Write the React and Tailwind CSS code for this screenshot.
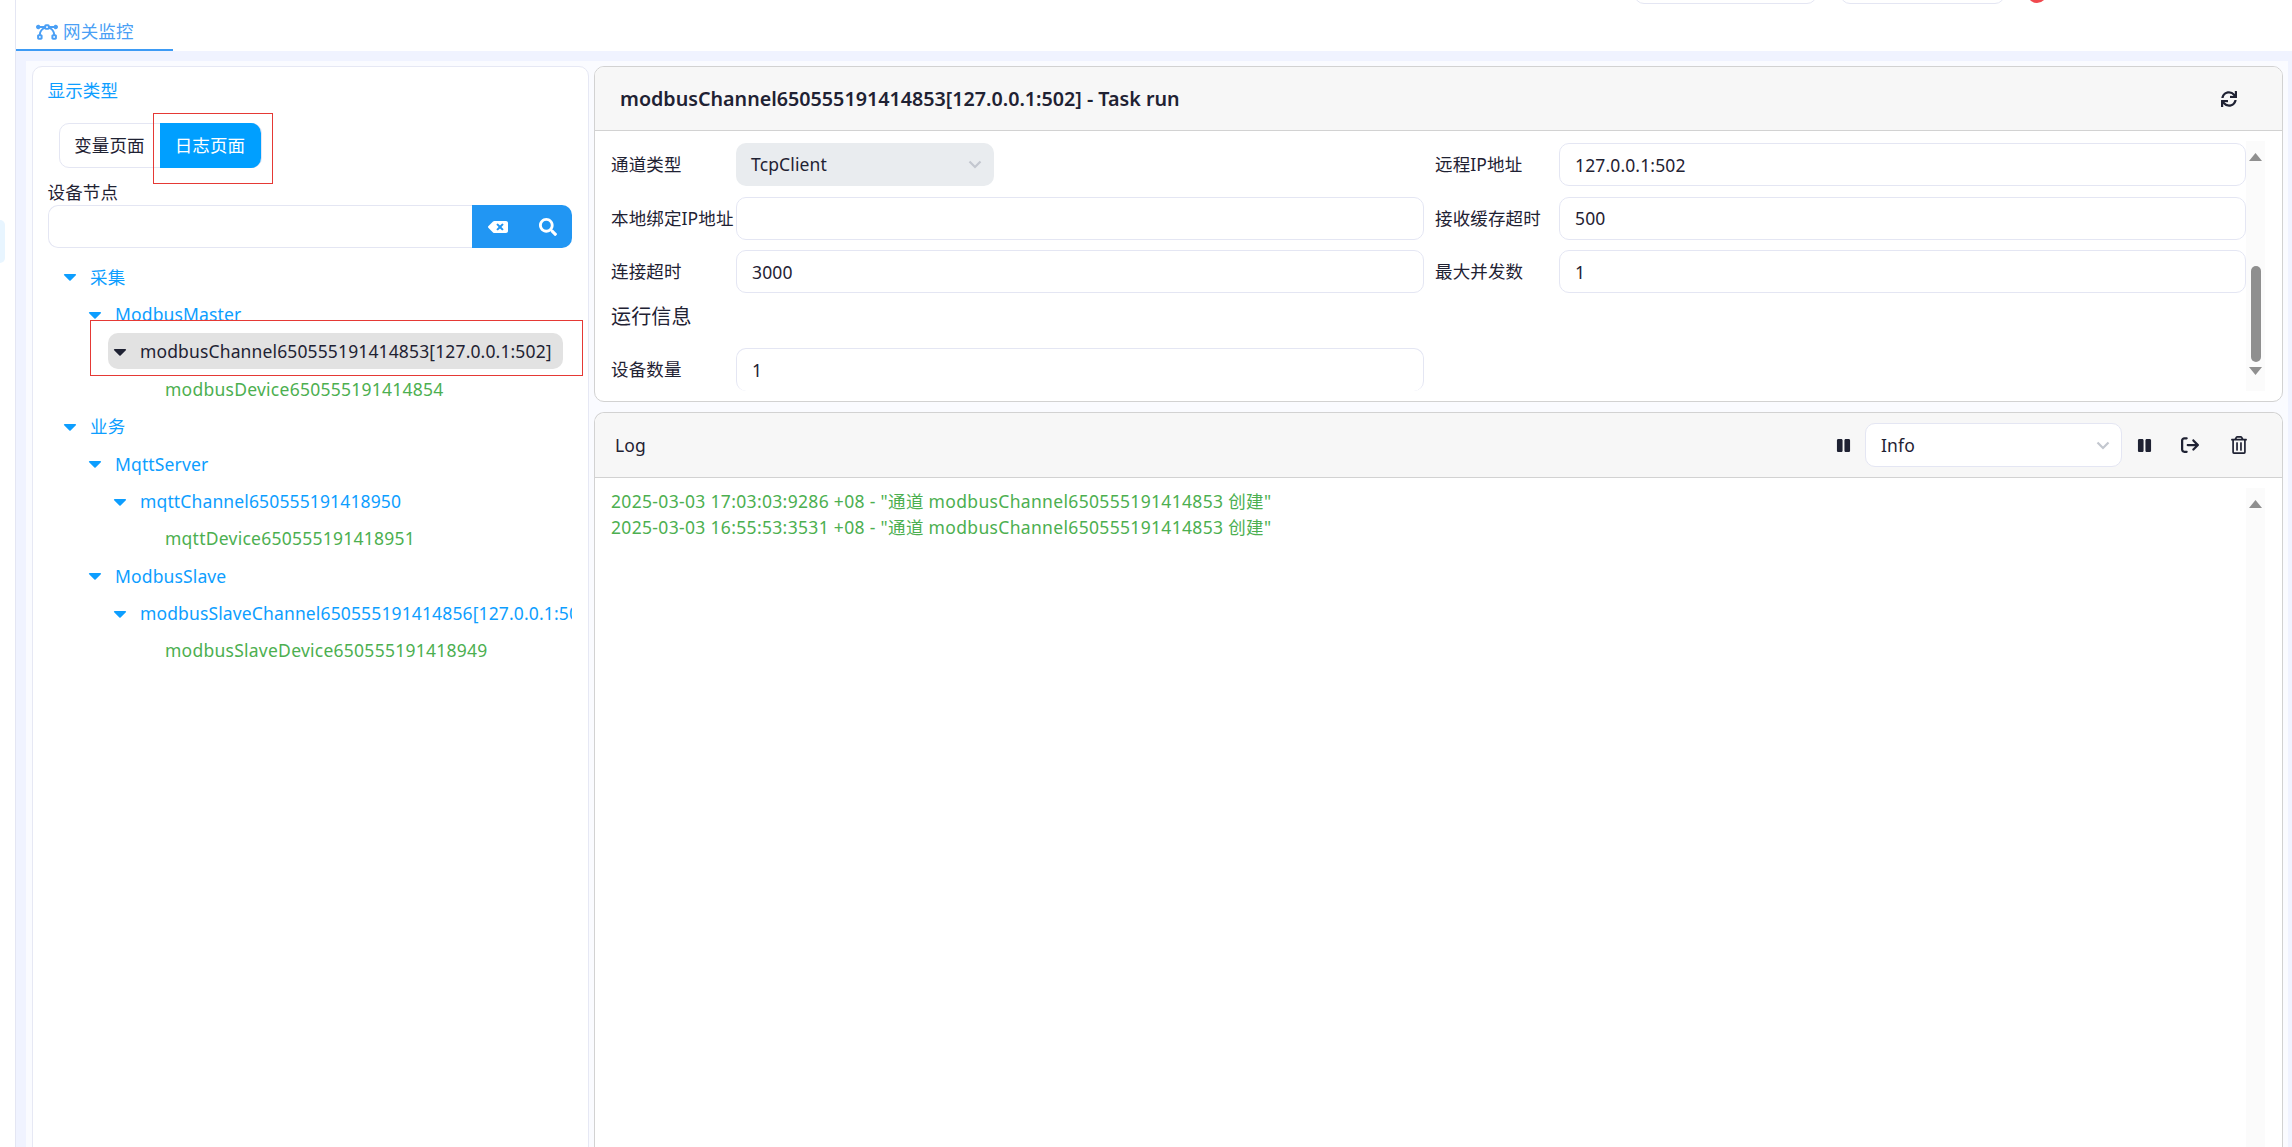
import React from "react";
import { FaBackspace, FaSearch, FaCaretDown, FaSync, FaPause, FaRegTrashAlt } from "react-icons/fa";
import { FaArrowRightFromBracket, FaBezierCurve } from "react-icons/fa6";

const tree = [
  { d: 0, t: "采集", c: "blue" },
  { d: 1, t: "ModbusMaster", c: "blue" },
  { d: 2, t: "modbusChannel650555191414853[127.0.0.1:502]", c: "sel" },
  { d: 3, t: "modbusDevice650555191414854", c: "green", leaf: true },
  { d: 0, t: "业务", c: "blue" },
  { d: 1, t: "MqttServer", c: "blue" },
  { d: 2, t: "mqttChannel650555191418950", c: "blue" },
  { d: 3, t: "mqttDevice650555191418951", c: "green", leaf: true },
  { d: 1, t: "ModbusSlave", c: "blue" },
  { d: 2, t: "modbusSlaveChannel650555191414856[127.0.0.1:502]", c: "blue" },
  { d: 3, t: "modbusSlaveDevice650555191418949", c: "green", leaf: true },
];

const indent = ["ml-0", "ml-[25px]", "ml-[50px]", "ml-[75px]"];

function TreeRow({ n }) {
  const color = n.c === "sel" ? "text-[#1f2233] bg-[#e2e2e2]" : n.c === "green" ? "text-[#4caf50] tracking-[0.25px]" : "text-[#0d9eff]";
  return (
    <div className="h-[37.4px] flex items-center whitespace-nowrap">
      <div className={`${indent[n.d]} ${color} h-[36px] shrink-0 flex items-center rounded-[10px] pl-[2px] pr-[11px]`}>
        <span className="w-[20px] shrink-0 flex justify-center">
          {!n.leaf && <FaCaretDown size={21} />}
        </span>
        <span className="ml-[10px]">{n.t}</span>
      </div>
    </div>
  );
}

function Field({ value, className = "" }) {
  return (
    <input
      readOnly
      value={value}
      className={`w-full h-[43px] rounded-[10px] border border-[#e4e6f3] bg-white px-[15px] outline-none text-[#1f2233] ${className}`}
    />
  );
}

function Label({ children, right }) {
  return <div className={`flex items-center whitespace-nowrap ${right ? "pl-[11px]" : ""}`}>{children}</div>;
}

function Chevron() {
  return (
    <svg width="14" height="9" viewBox="0 0 14 9" fill="none" className="shrink-0">
      <path d="M1.5 1.5 7 7l5.5-5.5" stroke="#c3c7cf" strokeWidth="2.2" />
    </svg>
  );
}

function Arrow({ up }) {
  return (
    <svg width="13" height="8" viewBox="0 0 13 8" className="shrink-0">
      <path d={up ? "M6.5 0 13 8H0z" : "M6.5 8 13 0H0z"} fill="#8f8f8f" />
    </svg>
  );
}

function IconSlot({ w, children }) {
  return <div className={`${w} h-[44px] shrink-0 flex items-center justify-center text-[#1f2233]`}>{children}</div>;
}

export default function App() {
  return (
    <div className="w-[2292px] h-[1147px] overflow-hidden flex bg-white text-[17.5px] tracking-[0.135px] text-[#1f2233] font-['Noto_Sans','Noto_Sans_CJK_SC',sans-serif]">
      <aside className="w-[16px] shrink-0 border-r border-[#e4e6f3] pt-[220px]">
        <div className="w-[5px] h-[43px] bg-[#e8f5ff] rounded-r-[6px]" />
      </aside>

      <main className="flex-1 min-w-0 flex flex-col">
        <header className="h-[51px] shrink-0 flex items-start bg-white">
          <div className="w-[157px] h-[51px] border-b-2 border-[#3d9bf5] pl-[20px] flex items-center gap-[5px] pt-[14px] text-[#4a9ff5]">
            <FaBezierCurve size={22} />
            <span>网关监控</span>
          </div>
          <div className="ml-auto flex items-start -mt-[40px] pr-[245px]">
            <div className="w-[183px] h-[44px] rounded-[10px] border border-[#e4e6f3]" />
            <div className="ml-[23px] w-[165px] h-[44px] rounded-[10px] border border-[#e4e6f3]" />
            <div className="ml-[22px] w-[20px] h-[20px] mt-[23px] rounded-full bg-[#f0484e]" />
          </div>
        </header>

        <div className="flex-1 min-h-0 bg-[#f0f3ff] pl-[10px] pr-[4px] pt-[10px]">
          <div className="h-full bg-[#fafbff] pl-[6px] pr-[5px] pt-[5px] flex gap-[5px]">
            {/* left card */}
            <section className="relative w-[557px] h-[1200px] shrink-0 bg-white rounded-[10px] border border-[#e6e8f4] pl-[15px] pr-[15px]">
              <div className="h-[28px] mt-[9px] -ml-[0.5px] leading-[28px] text-[#0d9eff]">显示类型</div>
              <div className="ml-[10.5px] mt-[19px] h-[45px] w-[203px] flex rounded-[10px] border border-[#e4e6f3]">
                <div className="w-[100px] flex items-center justify-center">变量页面</div>
                <div className="flex-1 flex items-center justify-center bg-[#009fff] text-white rounded-r-[10px] -my-px">日志页面</div>
              </div>
              <div className="mt-[12px] h-[25px] -ml-[0.5px] leading-[24px]">设备节点</div>
              <div className="w-[524px] h-[43px] flex">
                <div className="flex-1 rounded-l-[10px] border border-r-0 border-[#e4e6f3]" />
                <div className="w-[100px] flex items-center bg-[#2196f3] text-white rounded-r-[10px]">
                  <span className="w-[52px] flex justify-center"><FaBackspace size={20} /></span>
                  <span className="w-[48px] flex justify-center"><FaSearch size={18} /></span>
                </div>
              </div>
              <div className="w-[524px] mt-[10px] pl-[10px] overflow-hidden">
                {tree.map((n) => <TreeRow key={n.t} n={n} />)}
              </div>
              <div className="absolute left-[120px] top-[46px] w-[120px] h-[71px] border border-[#e53935]" />
              <div className="absolute left-[57px] top-[253px] w-[493px] h-[56px] border border-[#e53935]" />
            </section>

            {/* right column */}
            <div className="flex-1 min-w-0 flex flex-col gap-[10.5px]">
              <section className="h-[335.5px] shrink-0 rounded-[10px] border border-[#d2d2d2] overflow-hidden flex flex-col bg-white">
                <div className="h-[64px] shrink-0 bg-[#f7f7f7] border-b border-[#d2d2d2] flex items-center pl-[25px] pr-[45px]">
                  <h2 className="font-semibold text-[19.7px] tracking-normal">modbusChannel650555191414853[127.0.0.1:502] - Task run</h2>
                  <FaSync size={16} className="ml-auto" />
                </div>
                <div className="flex pt-[10px] pl-[16px]">
                  <div className="w-[1635px] h-[248px] mt-[2px] overflow-hidden shrink-0">
                    <div className="grid grid-cols-[125px_688px_135px_687px] auto-rows-[43px] gap-y-[10.5px]">
                      <Label>通道类型</Label>
                      <div className="w-[258px] h-[43px] rounded-[10px] bg-[#e9ecef] pl-[15px] pr-[12px] flex items-center justify-between">
                        <span>TcpClient</span>
                        <Chevron />
                      </div>
                      <Label right>远程IP地址</Label>
                      <Field value="127.0.0.1:502" />
                      <Label>本地绑定IP地址</Label>
                      <Field value="" />
                      <Label right>接收缓存超时</Label>
                      <Field value="500" />
                      <Label>连接超时</Label>
                      <Field value="3000" />
                      <Label right>最大并发数</Label>
                      <Field value="1" />
                    </div>
                    <div className="h-[55px] pt-[5px] leading-[38px] text-[20px]">运行信息</div>
                    <div className="grid grid-cols-[125px_688px] auto-rows-[43px]">
                      <Label>设备数量</Label>
                      <Field value="1" className="border-b-0" />
                    </div>
                  </div>
                  <div className="w-[19px] h-[250px] shrink-0 bg-[#fbfbfb] flex flex-col items-center pt-[12px] pb-[12px]">
                    <Arrow up />
                    <div className="w-[10px] h-[96px] mt-[105px] rounded-full bg-[#8f8f8f]" />
                    <div className="mt-[5px]"><Arrow /></div>
                  </div>
                </div>
              </section>

              <section className="flex-1 min-h-0 rounded-t-[10px] border border-b-0 border-[#d2d2d2] flex flex-col bg-white">
                <div className="h-[65px] shrink-0 bg-[#f7f7f7] rounded-t-[10px] border-b border-[#d2d2d2] flex items-center pl-[20px] pr-[18px]">
                  <span>Log</span>
                  <div className="ml-auto flex items-center">
                    <IconSlot w="w-[44px]"><FaPause size={15} /></IconSlot>
                    <div className="w-[257px] h-[44px] rounded-[10px] border border-[#e4e6f3] bg-white pl-[15px] pr-[11px] flex items-center justify-between">
                      <span>Info</span>
                      <Chevron />
                    </div>
                    <IconSlot w="w-[44px]"><FaPause size={15} /></IconSlot>
                    <IconSlot w="w-[48px]"><FaArrowRightFromBracket size={18} /></IconSlot>
                    <IconSlot w="w-[50px]"><FaRegTrashAlt size={18} /></IconSlot>
                  </div>
                </div>
                <div className="flex-1 min-h-0 flex pl-[16px] pt-[10px]">
                  <div className="w-[1635px] shrink-0 text-[#4caf50] leading-[26px] tracking-[0.33px] whitespace-nowrap">
                    <div>2025-03-03 17:03:03:9286 +08 - "通道 modbusChannel650555191414853 创建"</div>
                    <div>2025-03-03 16:55:53:3531 +08 - "通道 modbusChannel650555191414853 创建"</div>
                  </div>
                  <div className="w-[19px] shrink-0 bg-[#fbfbfb] flex flex-col items-center pt-[12px]">
                    <Arrow up />
                  </div>
                </div>
              </section>
            </div>
          </div>
        </div>
      </main>
    </div>
  );
}
